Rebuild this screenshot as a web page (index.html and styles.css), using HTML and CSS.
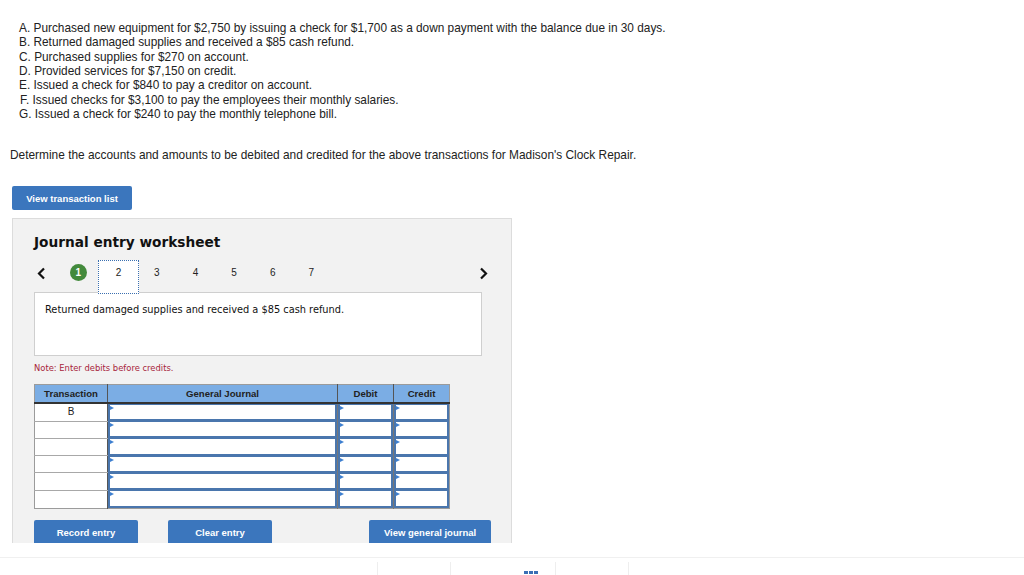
FILE: index.html
```html
<!DOCTYPE html>
<html>
<head>
<meta charset="utf-8">
<link rel="stylesheet" href="styles.css">
</head>
<body>
<div class="page">
  <div class="content">
    <div class="items">
      <div>A. Purchased new equipment for $2,750 by issuing a check for $1,700 as a down payment with the balance due in 30 days.</div>
      <div>B. Returned damaged supplies and received a $85 cash refund.</div>
      <div>C. Purchased supplies for $270 on account.</div>
      <div>D. Provided services for $7,150 on credit.</div>
      <div>E. Issued a check for $840 to pay a creditor on account.</div>
      <div class="f">F. Issued checks for $3,100 to pay the employees their monthly salaries.</div>
      <div>G. Issued a check for $240 to pay the monthly telephone bill.</div>
    </div>
    <p class="prompt">Determine the accounts and amounts to be debited and credited for the above transactions for Madison's Clock Repair.</p>
    <button class="btn btn-list">View transaction list</button>
    <section class="worksheet">
      <h2 class="ws-title">Journal entry worksheet</h2>
      <div class="pager">
        <span class="arrow"><svg width="9" height="13" viewBox="0 0 9 13"><path d="M7 1.5 L2 6.5 L7 11.5" fill="none" stroke="#111" stroke-width="2.2"/></svg></span>
        <div class="tabs">
          <span class="tab"><span class="dot">1</span></span>
          <span class="tab current">2</span>
          <span class="tab">3</span>
          <span class="tab">4</span>
          <span class="tab">5</span>
          <span class="tab">6</span>
          <span class="tab">7</span>
        </div>
        <span class="arrow next"><svg width="9" height="13" viewBox="0 0 9 13"><path d="M2 1.5 L7 6.5 L2 11.5" fill="none" stroke="#111" stroke-width="2.2"/></svg></span>
      </div>
      <div class="desc">Returned damaged supplies and received a $85 cash refund.</div>
      <p class="note">Note: Enter debits before credits.</p>
      <table class="journal">
        <thead>
          <tr><th class="c-tx">Transaction</th><th class="c-gj">General Journal</th><th class="c-dr">Debit</th><th class="c-cr">Credit</th></tr>
        </thead>
        <tbody>
          <tr><td class="tx">B</td><td class="in"><div class="box"></div></td><td class="in"><div class="box"></div></td><td class="in"><div class="box"></div></td></tr>
          <tr><td class="tx"></td><td class="in"><div class="box"></div></td><td class="in"><div class="box"></div></td><td class="in"><div class="box"></div></td></tr>
          <tr><td class="tx"></td><td class="in"><div class="box"></div></td><td class="in"><div class="box"></div></td><td class="in"><div class="box"></div></td></tr>
          <tr><td class="tx"></td><td class="in"><div class="box"></div></td><td class="in"><div class="box"></div></td><td class="in"><div class="box"></div></td></tr>
          <tr><td class="tx"></td><td class="in"><div class="box"></div></td><td class="in"><div class="box"></div></td><td class="in"><div class="box"></div></td></tr>
          <tr><td class="tx"></td><td class="in"><div class="box"></div></td><td class="in"><div class="box"></div></td><td class="in"><div class="box"></div></td></tr>
        </tbody>
      </table>
      <div class="actions">
        <button class="btn btn-act">Record entry</button>
        <button class="btn btn-act">Clear entry</button>
        <button class="btn btn-act wide">View general journal</button>
      </div>
    </section>
  </div>
  <footer class="footer">
    <div class="ft-cells">
      <span class="ft-cell c1"></span>
      <span class="ft-cell c2"><span class="ft-mark"></span></span>
      <span class="ft-cell c3"></span>
    </div>
  </footer>
</div>
</body>
</html>
```

FILE: styles.css
```css
* { box-sizing: border-box; }
html, body { margin: 0; padding: 0; background: #fff; }
body { font-family: "Liberation Sans", Arial, sans-serif; color: #222; }

.page { width: 1024px; height: 575px; overflow: hidden; }

.content { height: 543px; overflow: hidden; }

.items { margin: 21px 0 0 19px; font-size: 11.85px; line-height: 14.33px; color: #222; }
.items .f { padding-left: 1px; }

.prompt { margin: 27px 0 0 10px; font-size: 11.9px; line-height: 14px; color: #222; }

.btn {
  border: 0; border-radius: 2px; background: #3b76bd; color: #fff;
  font-family: "Liberation Sans", Arial, sans-serif; font-weight: bold; font-size: 9.5px;
  padding: 0; cursor: pointer;
}
.btn-list { display: block; margin: 24px 0 0 12px; width: 120px; height: 24px; }

.worksheet {
  margin: 8px 0 0 12px; width: 500px; height: 400px;
  background: #f2f2f2; border: 1px solid #dcdcdc;
  padding: 15px 0 0 21px;
}
.ws-title {
  margin: 0; font-family: "DejaVu Sans", Verdana, sans-serif; font-weight: bold;
  font-size: 13.7px; line-height: 16px; color: #111;
}

.pager { display: flex; align-items: flex-start; height: 32px; margin-top: 10px; width: 454px; }
.arrow { display: block; width: 9px; height: 13px; margin: 7px 0 0 3px; }
.arrow svg { display: block; }
.arrow.next { margin-left: auto; margin-right: 0; }
.tabs { display: flex; margin-left: 13px; }
.tab {
  width: 38.6px; height: 32px; display: flex; justify-content: center;
  padding-top: 8px; font-size: 10px; line-height: 10px; color: #222;
  font-family: "Liberation Sans", Arial, sans-serif; position: relative;
}
.tab .dot {
  width: 17px; height: 17px; border-radius: 50%; background: #438a3c; color: #fff;
  font-weight: bold; font-size: 10px; line-height: 17px; text-align: center; margin-top: -4px;
}
.tab.current {
  width: 41px; height: 34px; margin: 0 -1px 0 0; background: #fff; padding-left: 1px;
  outline: 1px dotted #3a6fb0; outline-offset: -1px; z-index: 1;
}

.desc {
  width: 448px; height: 64px; background: #fff; border: 1px solid #cfcfcf;
  padding: 11px 0 0 10px; font-family: "DejaVu Sans", Verdana, sans-serif;
  font-size: 9.8px; line-height: 12px; color: #111;
}

.note {
  margin: 6px 0 0 0; font-family: "DejaVu Sans", Verdana, sans-serif; font-size: 8.4px;
  line-height: 12px; color: #a7243a;
}

.journal {
  margin-top: 10px; border-collapse: collapse; width: 415px; table-layout: fixed;
  border: 1px solid #9b9b9b; background: #fff;
}
.journal th {
  background: #7badE4; height: 18px; padding: 0; font-size: 9.6px; font-weight: bold;
  color: #222; border-right: 1px solid #555; border-bottom: 2px solid #333;
  font-family: "Liberation Sans", Arial, sans-serif;
}
.journal th:last-child { border-right: 0; }
.c-tx { width: 73px; }
.c-gj { width: 230px; }
.c-dr { width: 56px; }
.c-cr { width: 56px; }
.journal td { padding: 0; height: 17.3px; }
.journal td.tx {
  border-right: 1px solid #555; border-bottom: 1px solid #a8a8a8;
  text-align: center; font-size: 10px; color: #222; vertical-align: top; line-height: 15px;
}
.journal tr:last-child td.tx { border-bottom: 0; }
.journal td.in { padding: 0; vertical-align: top; border-right: 1px solid #777; }
.journal td.in:last-child { border-right: 0; }
.box {
  height: 17.3px; border: 1px solid #4a76ad; border-width: 1px 2px 2px 2px; position: relative; background: #fff;
}
.box::before {
  content: ""; position: absolute; left: 0; top: 1px; width: 0; height: 0;
  border-top: 2.5px solid transparent; border-bottom: 2.5px solid transparent;
  border-left: 4px solid #3d7fd0;
}

.actions { display: flex; margin-top: 11px; width: 457px; }
.btn-act { width: 104px; height: 26px; }
.btn-act + .btn-act { margin-left: 30px; }
.btn-act.wide { width: 122px; margin-left: auto; }

.footer { height: 32px; padding-top: 14px; }
.ft-cells { border-top: 1px solid #f0f0f0; height: 18px; display: flex; padding-top: 4px; }
.ft-cell { display: block; height: 14px; border-left: 1px solid #eeeeee; position: relative; }
.c1 { margin-left: 377px; width: 73px; }
.c2 { width: 105px; }
.c3 { width: 74px; border-right: 1px solid #eeeeee; }
.ft-mark {
  position: absolute; left: 73px; top: 9px; width: 14px; height: 3px;
  background: repeating-linear-gradient(90deg, #3a6fb5 0 4px, transparent 4px 5px);
}
```
